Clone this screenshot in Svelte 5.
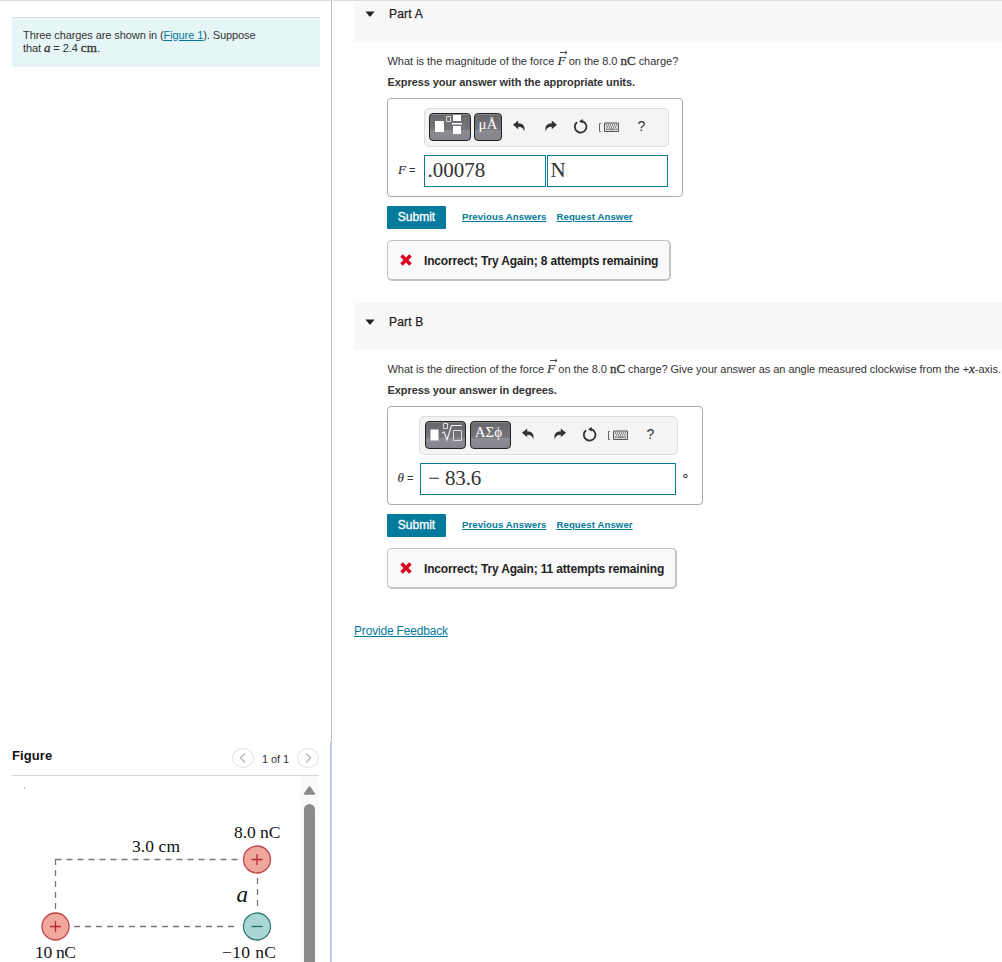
<script>
    const parts = [
        {
            id: "a",
            title: "Part A",
            ask: "magnitude",
            rest: "",
            hint: "Express your answer with the appropriate units.",
            label: "F",
            fields: [".00078", "N"],
            attempts: 8,
        },
        {
            id: "b",
            title: "Part B",
            ask: "direction",
            rest: "Give your answer as an angle measured clockwise from the",
            hint: "Express your answer in degrees.",
            label: "θ",
            fields: ["− 83.6"],
            attempts: 11,
        },
    ];
</script>

<div class="page">
    <aside>
        <div class="intro">
            Three charges are shown in (<a href="#figure">Figure 1</a>). Suppose<br />
            that <i class="var">a</i> = 2.4 <span class="unit">cm</span>.
        </div>
        <section class="figure" id="figure">
            <header>
                <h2>Figure</h2>
                <div class="pager">
                    <button aria-label="Previous">
                        <svg width="8" height="10" viewBox="0 0 8 10"><path d="M6 .5L1.500 5 6 9.500" /></svg>
                    </button>
                    <span>1 of 1</span>
                    <button aria-label="Next">
                        <svg width="8" height="10" viewBox="0 0 8 10"><path d="M2 .5L6.500 5 2 9.500" /></svg>
                    </button>
                </div>
            </header>
            <div class="viewer">
                <svg class="diagram" width="288" height="186" viewBox="12 776 288 186">
                    <circle cx="24.500" cy="788" r=".8" fill="#99b" />
                    <g class="dash">
                        <path d="M55.500 859.500H238" />
                        <path d="M55.500 859v50" />
                        <path d="M74 926.500H238" />
                        <path d="M257.500 878v30" />
                    </g>
                    <g class="plus">
                        <circle cx="257" cy="859.500" r="13.500" />
                        <path d="M251.500 859.500h11M257 854v11" />
                        <circle cx="55.500" cy="926.500" r="13.500" />
                        <path d="M50 926.500h11M55.500 921v11" />
                    </g>
                    <g class="minus">
                        <circle cx="257" cy="926.500" r="13.500" />
                        <path d="M251.500 926.500h11" />
                    </g>
                    <text x="132" y="852" textLength="48">3.0 cm</text>
                    <text x="234" y="838" textLength="46.500">8.0 nC</text>
                    <text x="35" y="958" textLength="41">10 nC</text>
                    <text x="222" y="958" textLength="54">−10 nC</text>
                    <text x="236.500" y="902" class="side">a</text>
                </svg>
                <div class="scrollbar">
                    <svg width="13" height="10" viewBox="0 0 13 10"><path d="M5.500 .8q1-1.300 2 0l5 7.200q.6 1.500-1 1.500h-10q-1.600 0-1-1.500z" fill="#8b8b8b" /></svg>
                    <div class="thumb"></div>
                </div>
            </div>
        </section>
    </aside>

    <main>
        {#each parts as part}
            <section class="part part-{part.id}">
                <h3>
                    <svg width="10" height="6" viewBox="0 0 10 6"><path d="M.5.5h9L5.500 5.500h-1z" fill="#222" /></svg>
                    {part.title}
                </h3>
                <div class="body">
                    <p class="question">
                        What is the {part.ask} of the force
                        <span class="vec"><i>F</i><svg width="9" height="5" viewBox="0 0 9 5"><path d="M0 2.500h7M5.200 1l1.800 1.500-1.800 1.500" /></svg></span>
                        on the 8.0 <span class="unit">nC</span> charge?
                        {#if part.rest}
                            {part.rest} +<i class="var">x</i>-axis.
                        {/if}
                    </p>
                    <p class="hint">{part.hint}</p>
                    <div class="answer">
                        <div class="toolbar">
                            {#if part.id === "a"}
                                <button class="dark" aria-label="Templates">
                                    <svg width="40" height="27" viewBox="0 0 40 27">
                                        <path d="M5 7h9v11H5zM23 1h8v6h-8zM22 9h10v1.500H22zM23 12h8v8h-8z" fill="#fff" />
                                        <path d="M16.500 2.500h4v5h-4z" fill="none" stroke="#ddd" />
                                    </svg>
                                </button>
                                <button class="dark units">μÅ</button>
                            {:else}
                                <button class="dark" aria-label="Templates">
                                    <svg width="40" height="27" viewBox="0 0 40 27">
                                        <path d="M4.500 7.500h8v11h-8z" fill="#fff" />
                                        <path d="M17.500 1.500h4v5h-4zM27.500 8.500h8v10h-8z" fill="none" stroke="#ddd" />
                                        <path d="M16 11l2-1 3 8L25.500 3.500H36" fill="none" stroke="#eee" stroke-width="1.200" />
                                    </svg>
                                </button>
                                <button class="dark greek">ΑΣϕ</button>
                            {/if}
                            <svg class="undo" width="13" height="12" viewBox="0 0 13 12"><path d="M0 4.800L5.200.5v2.700c4.800 0 7.400 3 6 8.300C10.600 8.300 8.800 6.800 5.200 6.800v2.500z" fill="#333" /></svg>
                            <svg class="redo" width="13" height="12" viewBox="0 0 13 12"><path d="M13 4.800L7.800.5v2.700C3 3.200.4 6.200 1.800 11.500 2.400 8.300 4.200 6.800 7.800 6.800v2.500z" fill="#333" /></svg>
                            <svg class="reset" width="15" height="15" viewBox="0 0 15 15">
                                <path d="M4 3.200A5.800 5.800 0 1 0 9 2.100" fill="none" stroke="#333" stroke-width="1.800" />
                                <path d="M6 2.200L9.800 0v4.600z" fill="#333" />
                            </svg>
                            <svg class="keys" width="21" height="11" viewBox="0 0 21 11">
                                <path d="M2 1.500H.5v8H2" fill="none" stroke="#666" />
                                <path d="M5.500 1h14v8.500h-14z" fill="#ddd" stroke="#555" />
                                <path d="M7 3h11M8 5h10" stroke="#444" stroke-dasharray="1 1" />
                                <path d="M7 7.200h1.500M9.500 7.200h6M16.500 7.200H18" stroke="#444" />
                            </svg>
                            <span class="help">?</span>
                        </div>
                        <div class="entry">
                            <label for="in-{part.id}"><i>{part.label}</i> =</label>
                            {#each part.fields as field}
                                <div class="field">{field}</div>
                            {/each}
                            {#if part.id === "b"}<span class="deg">∘</span>{/if}
                        </div>
                    </div>
                    <div class="actions">
                        <button class="submit">Submit</button>
                        <a href="#previous">Previous Answers</a>
                        <a href="#request">Request Answer</a>
                    </div>
                    <div class="result">
                        <svg width="12" height="12" viewBox="0 0 12 12"><path d="M1.500 1.500l9 9M10.500 1.500l-9 9" stroke="#d9001f" stroke-width="3.500" /></svg>
                        <span>Incorrect; Try Again; {part.attempts} attempts remaining</span>
                    </div>
                </div>
            </section>
        {/each}
        <a class="feedback" href="#feedback">Provide Feedback</a>
    </main>
</div>

<style>
    :global(body) {
        background: #fff;
        overflow: hidden;
    }
    .page {
        display: flex;
        box-sizing: border-box;
        width: 1002px;
        height: 962px;
        border-top: 1px solid #dcdcdc;
        overflow: hidden;
        font-family: "Liberation Sans", Arial, sans-serif;
        font-size: 11px;
        color: #333;
    }
    a {
        color: #047a9c;
    }
    button {
        font-family: inherit;
        padding: 0;
        border: 0;
    }
    i,
    .unit {
        font-family: "Liberation Serif", serif;
    }
    .unit,
    .var {
        font-size: 13px;
        line-height: 0;
        -webkit-text-stroke: 0.3px #333;
    }

    aside {
        display: flex;
        flex-direction: column;
        justify-content: space-between;
        flex: none;
        box-sizing: border-box;
        width: 332px;
        background: linear-gradient(#b9bfcf, #b9bfcf) right top / 1px 741px no-repeat;
    }
    .intro {
        box-sizing: border-box;
        width: 308px;
        height: 50px;
        margin: 16px 0 0 12px;
        padding: 11px;
        border-top: 1px solid #d5dfdf;
        background: #e6f6f7;
        line-height: 13px;
        letter-spacing: -0.09px;
    }
    .intro .unit {
        letter-spacing: 0.3px;
    }
    .figure {
        box-sizing: border-box;
        width: 331px;
        height: 220px;
        padding-left: 12px;
        border-right: 1px solid #b0c4de;
        box-shadow: 1px 0 #c6d6e8;
    }
    .figure header {
        display: flex;
        justify-content: space-between;
        box-sizing: border-box;
        width: 307px;
        height: 34px;
        border-bottom: 1px solid #d6d6d6;
    }
    h2 {
        margin: 6px 0 0;
        font-size: 13px;
        line-height: 16px;
        color: #111;
        letter-spacing: 0.1px;
    }
    .pager {
        display: flex;
        align-items: center;
        height: 20px;
        margin-top: 6px;
        gap: 8px;
    }
    .pager button {
        display: grid;
        place-items: center;
        box-sizing: border-box;
        width: 22px;
        height: 20px;
        border: 1px solid #e2e2e2;
        border-radius: 50%;
        background: #fff;
    }
    .pager path {
        fill: none;
        stroke: #bbb;
        stroke-width: 1.5;
    }
    .pager span {
        padding-top: 2px;
        letter-spacing: -0.1px;
    }
    .viewer {
        display: flex;
        width: 307px;
        height: 186px;
    }
    .diagram {
        display: block;
        font: 17.5px "Liberation Serif", serif;
        fill: #111;
    }
    .diagram path,
    .diagram circle {
        stroke-width: 1.3;
    }
    .dash {
        fill: none;
        stroke: #777;
        stroke-dasharray: 6 5;
    }
    .plus circle {
        fill: #f0a79d;
        stroke: #c0434a;
    }
    .plus path {
        stroke: #b8292f;
    }
    .minus circle {
        fill: #a9d8d4;
        stroke: #397a78;
    }
    .minus path {
        stroke: #1e6663;
    }
    .side {
        font-size: 23px;
        font-style: italic;
    }
    .scrollbar {
        display: flex;
        flex-direction: column;
        align-items: center;
        width: 19px;
        padding-top: 10px;
        box-sizing: border-box;
        background: #fafafa;
    }
    .thumb {
        width: 11px;
        height: 170px;
        margin-top: 9px;
        border-radius: 6px 6px 0 0;
        background: #8b8b8b;
    }

    main {
        flex: none;
        width: 648px;
        margin: -6px 0 0 22px;
    }
    .part {
        height: 308px;
    }
    h3 {
        display: flex;
        align-items: flex-start;
        gap: 14px;
        box-sizing: border-box;
        height: 47px;
        margin: 0;
        padding: 11px 0 0 11px;
        background: #f8f8f8;
        font-size: 12px;
        font-weight: normal;
        line-height: 16px;
        letter-spacing: 0.2px;
        color: #222;
        -webkit-text-stroke: 0.25px #222;
    }
    h3 svg {
        margin-top: 5px;
    }
    .body {
        padding-left: 33px;
    }
    p {
        margin: 0 0 0 0.5px;
        white-space: nowrap;
    }
    .question {
        height: 31px;
        padding-top: 1px;
        box-sizing: border-box;
        line-height: 36px;
        letter-spacing: -0.02px;
    }
    .part-b .question {
        letter-spacing: -0.035px;
    }
    .vec {
        position: relative;
        font-size: 14px;
        line-height: 1;
    }
    .vec i {
        font-size: 13.5px;
        -webkit-text-stroke: 0.2px #333;
    }
    .vec svg {
        position: absolute;
        left: 2.5px;
        top: -2px;
        fill: none;
        stroke: #333;
        stroke-width: 0.9;
    }
    .hint {
        height: 25px;
        line-height: 18px;
        font-weight: bold;
        letter-spacing: -0.08px;
    }
    .answer {
        box-sizing: border-box;
        width: 296px;
        height: 99px;
        padding-top: 9px;
        border: 1px solid #aaa;
        border-radius: 4px;
    }
    .part-b .answer {
        width: 316px;
    }
    .toolbar {
        display: flex;
        align-items: flex-start;
        box-sizing: border-box;
        width: 245px;
        height: 39px;
        margin-left: 36px;
        padding: 4px 0 0 4px;
        border: 1px solid #ddd;
        border-radius: 5px;
        background: #f4f4f4;
    }
    .part-b .toolbar {
        width: 259px;
        margin-left: 31px;
        padding-left: 5px;
    }
    .dark {
        box-sizing: border-box;
        width: 42px;
        height: 28px;
        margin-right: 3px;
        border: 1px solid #222;
        border-radius: 4px;
        background: linear-gradient(#66666b, #76767b 62%, #8c8c94 63%, #85858d);
        box-shadow: inset 0 1px #888;
        color: #fff;
        font: 16px/20px "Liberation Serif", serif;
    }
    .dark svg {
        display: block;
    }
    .part-b .dark {
        width: 41px;
        margin-right: 4px;
    }
    .units {
        width: 28px;
        margin-right: 11px;
        font-size: 15px;
        padding-bottom: 6px;
    }
    .part-b .greek {
        margin-right: 11px;
        font-size: 15px;
        padding: 0 4px 7px 0;
    }
    .undo {
        margin-top: 7px;
    }
    .redo {
        margin: 7px 0 0 18px;
    }
    .reset {
        margin: 6px 0 0 16px;
    }
    .keys {
        margin: 9px 0 0 11px;
    }
    .help {
        margin: 5px 0 0 17.5px;
        font-size: 14px;
        line-height: 16px;
    }
    .entry {
        display: flex;
        align-items: center;
        gap: 1px;
        margin-top: 8px;
    }
    label {
        width: 25px;
        padding-left: 10px;
        margin-top: -3px;
        font-size: 11px;
        white-space: nowrap;
    }
    label i {
        font-size: 13px;
        -webkit-text-stroke: 0.2px #333;
    }
    .part-b label {
        width: 21px;
        padding-left: 9.5px;
        margin-right: 0.5px;
    }
    .field {
        box-sizing: border-box;
        width: 122px;
        height: 32px;
        padding-left: 2.5px;
        border: 1px solid #047a9c;
        font: 21px/28px "Liberation Serif", serif;
    }
    .field + .field {
        width: 121px;
    }
    .part-b .field {
        width: 256px;
        padding-left: 7px;
        letter-spacing: -0.1px;
    }
    .deg {
        padding: 0 0 8px 4px;
        font-size: 14px;
    }
    .actions {
        display: flex;
        align-items: center;
        gap: 10px;
        height: 23px;
        margin-top: 9px;
    }
    .actions a {
        margin-top: -2px;
        font-size: 9.6px;
        font-weight: bold;
        letter-spacing: 0.1px;
    }
    .submit {
        width: 59px;
        height: 23px;
        margin-right: 6px;
        padding-bottom: 2px;
        background: #047a9c;
        border-radius: 1px;
        color: #fff;
        font-size: 12px;
        -webkit-text-stroke: 0.3px #fff;
    }
    .result {
        display: flex;
        align-items: center;
        gap: 12px;
        box-sizing: border-box;
        width: 284px;
        height: 41px;
        margin-top: 11px;
        padding-left: 12px;
        border: 1px solid #c4c4c4;
        border-width: 1px 2px 2px 1px;
        border-radius: 5px;
        background: #f9f9f9;
        color: #222;
        font-size: 12px;
        font-weight: bold;
        letter-spacing: -0.16px;
        white-space: nowrap;
    }
    .result span {
        padding-top: 2px;
    }
    .part-b .result {
        width: 290px;
    }
    .feedback {
        display: inline-block;
        margin-top: 12px;
        font-size: 12px;
        line-height: 16px;
        letter-spacing: -0.18px;
    }
</style>
